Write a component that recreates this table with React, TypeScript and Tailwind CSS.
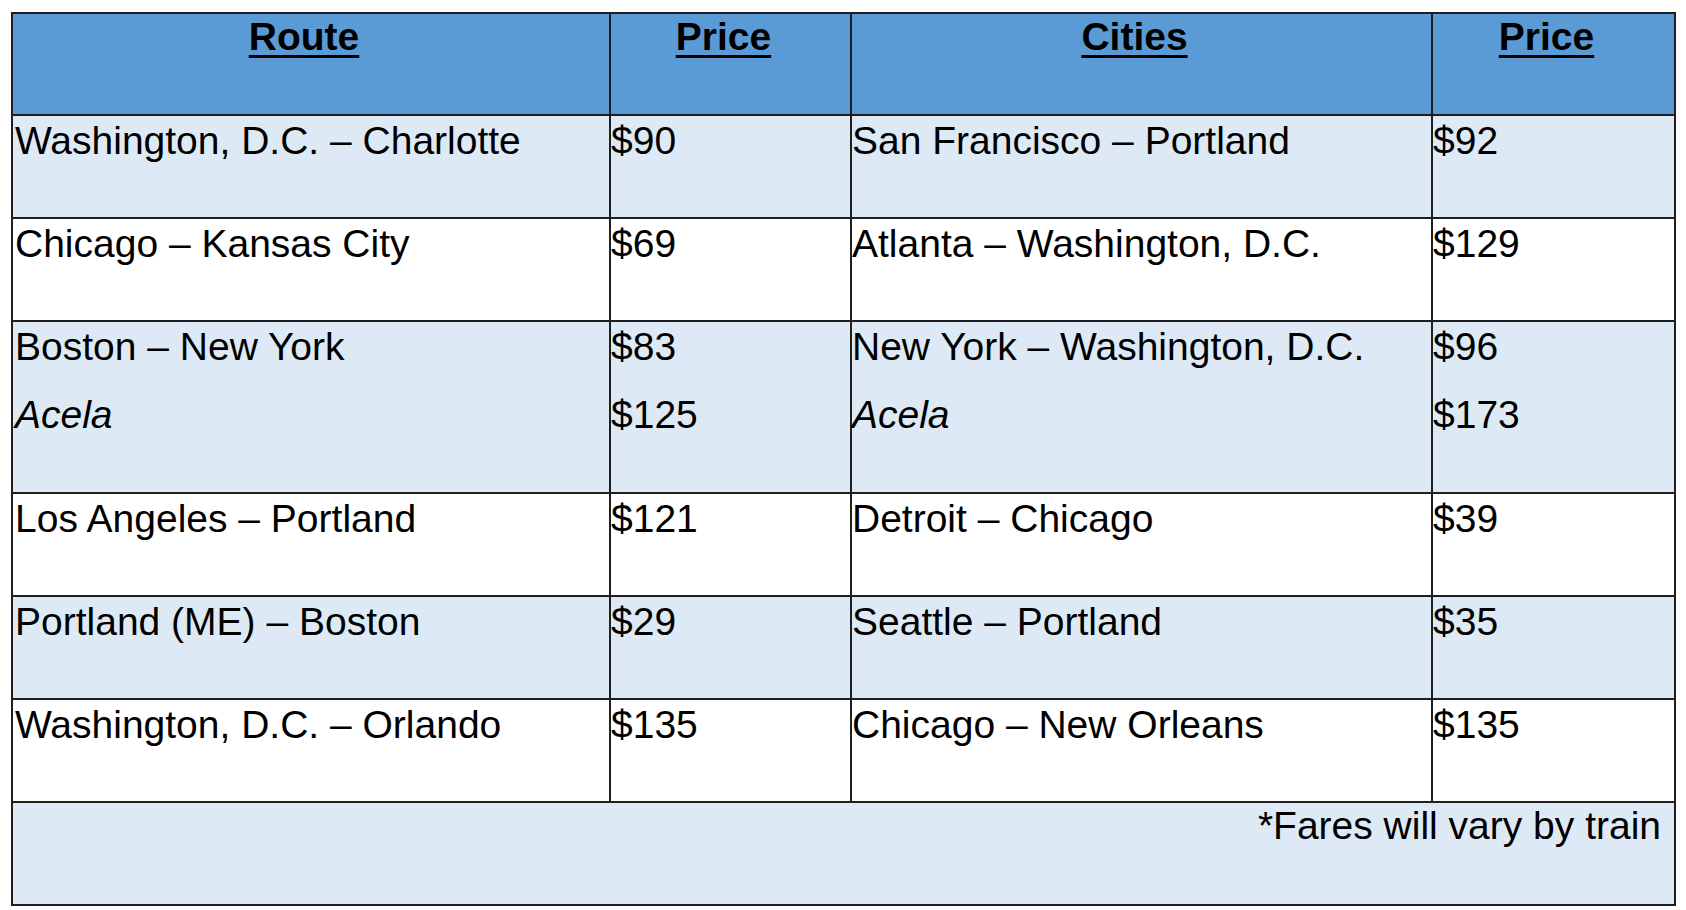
const rows = [
  { route: ['Washington, D.C. – Charlotte'], price: ['$90'], cities: ['San Francisco – Portland'], price2: ['$92'], light: true },
  { route: ['Chicago – Kansas City'], price: ['$69'], cities: ['Atlanta – Washington, D.C.'], price2: ['$129'], light: false },
  { route: ['Boston – New York', 'Acela'], price: ['$83', '$125'], cities: ['New York – Washington, D.C.', 'Acela'], price2: ['$96', '$173'], light: true },
  { route: ['Los Angeles – Portland'], price: ['$121'], cities: ['Detroit – Chicago'], price2: ['$39'], light: false },
  { route: ['Portland (ME) – Boston'], price: ['$29'], cities: ['Seattle – Portland'], price2: ['$35'], light: true },
  { route: ['Washington, D.C. – Orlando'], price: ['$135'], cities: ['Chicago – New Orleans'], price2: ['$135'], light: false },
];

function Cell({ lines, first, name }: { lines: string[]; first?: boolean; name?: boolean }) {
  return (
    <td className={first ? 'border-2 border-[#1f1f1f] align-top pt-[2px] pl-[2px]' : 'border-2 border-[#1f1f1f] align-top pt-[2px] pl-0'}>
      {lines.map((l, i) => (
        <div key={i} className={i === 1 ? (name ? 'mt-[23px] italic leading-[45px]' : 'mt-[23px] leading-[45px]') : 'leading-[45px]'}>
          {l}
        </div>
      ))}
    </td>
  );
}

export default function App() {
  return (
    <div className="w-[1686px] h-[910px] bg-white pt-[12px] pl-[11px] font-['Liberation_Sans',Arial,sans-serif] text-black text-[39px]">
      <table className="table-fixed border-collapse w-[1663px]">
        <colgroup>
          <col className="w-[598px]" />
          <col className="w-[241px]" />
          <col className="w-[581px]" />
          <col className="w-[243px]" />
        </colgroup>
        <thead>
          <tr className="h-[102px] bg-[#5b9bd5]">
            {['Route', 'Price', 'Cities', 'Price'].map((h, i) => (
              <th key={i} className="border-2 border-[#1f1f1f] align-top text-center font-bold underline underline-offset-[5px] decoration-[3px] pt-0 pr-[14px] leading-[45px]">
                {h}
              </th>
            ))}
          </tr>
        </thead>
        <tbody>
          {rows.map((r, i) => (
            <tr key={i} className={(r.route.length > 1 ? 'h-[172px] ' : 'h-[103px] ') + (r.light ? 'bg-[#ddeaf6]' : 'bg-white')}>
              <Cell lines={r.route} first name />
              <Cell lines={r.price} />
              <Cell lines={r.cities} name />
              <Cell lines={r.price2} />
            </tr>
          ))}
          <tr className="h-[103px] bg-[#ddeaf6]">
            <td colSpan={4} className="border-2 border-[#1f1f1f] align-top text-right pr-[13px] pt-0 leading-[45px]">
              *Fares will vary by train
            </td>
          </tr>
        </tbody>
      </table>
    </div>
  );
}
